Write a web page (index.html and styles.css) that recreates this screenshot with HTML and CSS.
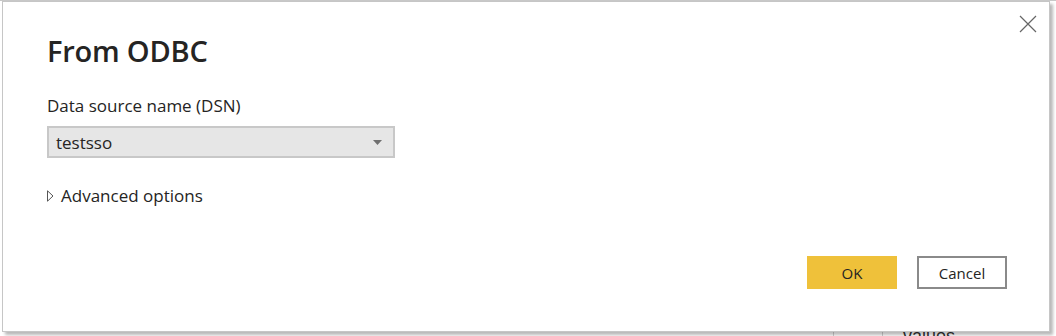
FILE: index.html
```html
<!DOCTYPE html>
<html>
<head>
<meta charset="utf-8">
<link rel="stylesheet" href="styles.css">
</head>
<body>
<div class="app">
  <div class="app-topline"></div>
  <div class="app-bottom">
    <span class="app-col"></span>
    <span class="app-col second"></span>
    <span class="app-text">values</span>
  </div>
</div>
<div class="dialog">
  <button class="close" aria-label="Close">
    <svg width="18" height="18" viewBox="0 0 18 18"><path d="M1 1 L17 17 M17 1 L1 17" stroke="#666" stroke-width="1.2" fill="none"/></svg>
  </button>
  <h1 class="title">From ODBC</h1>
  <div class="field">
    <label class="label">Data source name (DSN)</label>
    <div class="select">
      <span class="select-value">testsso</span>
      <svg class="select-arrow" width="9" height="5" viewBox="0 0 9 5"><path d="M0 0 H9 L4.5 5 Z" fill="#707070"/></svg>
    </div>
  </div>
  <div class="advanced">
    <svg class="adv-arrow" width="7" height="12" viewBox="0 0 7 12"><path d="M0.5 0.8 L6 6 L0.5 11.2 Z" fill="none" stroke="#555" stroke-width="1"/></svg>
    <span>Advanced options</span>
  </div>
  <div class="actions">
    <button class="btn btn-primary">OK</button>
    <button class="btn btn-secondary">Cancel</button>
  </div>
</div>
</body>
</html>
```
FILE: styles.css
```css
html, body {
  margin: 0;
  padding: 0;
}
body {
  width: 1056px;
  height: 336px;
  overflow: hidden;
  background: #ffffff;
  position: relative;
  font-family: "Open Sans", "Noto Sans", sans-serif;
  color: #252423;
}
.app {
  position: absolute;
  inset: 0;
}
.app-topline {
  height: 1px;
  background: #c8c8c8;
}
.app-bottom {
  position: absolute;
  left: 0;
  right: 0;
  bottom: 0;
  height: 8px;
}
.app-col {
  position: absolute;
  left: 833px;
  top: 0;
  bottom: 0;
  width: 1px;
  background: #d0d0d0;
}
.app-col.second {
  left: 882px;
}
.app-text {
  position: absolute;
  left: 903px;
  top: -1px;
  font-size: 18px;
  line-height: 18px;
  color: #333;
  font-family: "Liberation Sans", sans-serif;
}
.dialog {
  position: absolute;
  left: 2px;
  top: 1px;
  width: 958px;
  height: 329px;
  background: #ffffff;
  border: 1px solid #c6c6c6;
  box-shadow: 3px 3px 3px rgba(0,0,0,0.28);
  padding: 0 44px;
  box-sizing: content-box;
  display: flex;
  flex-direction: column;
}
.close {
  position: absolute;
  right: 10px;
  top: 11px;
  width: 22px;
  height: 22px;
  padding: 2px;
  border: 0;
  background: transparent;
}
.title {
  margin: 31px 0 0 0;
  font-size: 29px;
  font-weight: 600;
  line-height: 36px;
  letter-spacing: -0.2px;
  color: #252423;
}
.field {
  margin-top: 26px;
  display: flex;
  flex-direction: column;
}
.label {
  font-size: 17px;
  line-height: 22px;
  color: #252423;
}
.select {
  margin-top: 9px;
  width: 326px;
  height: 28px;
  background: #e6e6e6;
  border: 2px solid #c8c8c8;
  display: flex;
  align-items: center;
  justify-content: space-between;
  padding: 0 11px 0 7px;
  box-sizing: content-box;
}
.select-value {
  font-size: 17px;
  color: #252423;
}
.advanced {
  margin-top: 26px;
  display: flex;
  align-items: center;
  gap: 7px;
  font-size: 17px;
  line-height: 24px;
  color: #252423;
}
.actions {
  margin-top: auto;
  margin-bottom: 42px;
  display: flex;
  justify-content: flex-end;
  gap: 20px;
  margin-right: -2px;
}
.btn {
  width: 90px;
  height: 33px;
  font-family: "Open Sans", "Noto Sans", sans-serif;
  font-size: 15px;
  color: #252423;
  box-sizing: border-box;
  cursor: pointer;
}
.btn-primary {
  background: #efc13a;
  border: 0;
}
.btn-secondary {
  background: #ffffff;
  border: 2px solid #8a8a8a;
}
```
